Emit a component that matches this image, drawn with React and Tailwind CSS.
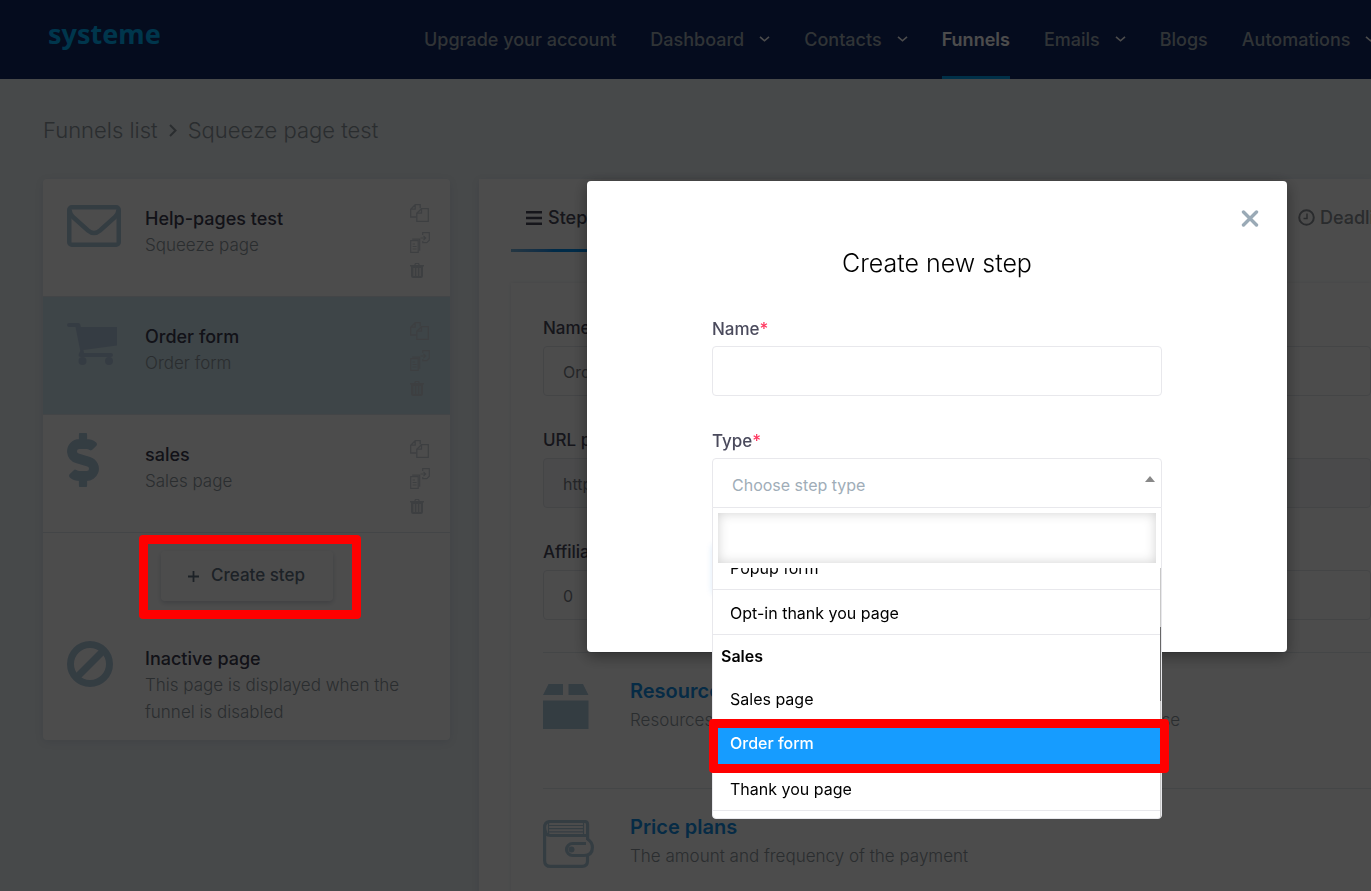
import React, { useState } from 'react';
import { FaDollarSign } from 'react-icons/fa';

const NAV_ITEMS = [
    { label: 'Upgrade your account' },
    { label: 'Dashboard', menu: true },
    { label: 'Contacts', menu: true },
    { label: 'Funnels', active: true },
    { label: 'Emails', menu: true },
    { label: 'Blogs' },
    { label: 'Automations', menu: true },
];

const STEPS = [
    { name: 'Help-pages test', type: 'Squeeze page', icon: 'mail' },
    { name: 'Order form', type: 'Order form', icon: 'cart', selected: true },
    { name: 'sales', type: 'Sales page', icon: 'dollar' },
];

const FIELDS = [
    { id: 'step-name', label: 'Name', value: 'Order form' },
    { id: 'step-url', label: 'URL path', value: 'https://', muted: true },
    { id: 'step-commission', label: 'Affiliate commission', value: '0' },
];

function ChevronDown() {
    return (
        <svg width="11" height="6" viewBox="0 0 11 6" fill="none" stroke="#fff" strokeWidth="1.6">
            <path d="M1 .8l4.500 4L10 .8" />
        </svg>
    );
}

function MailIcon() {
    return (
        <svg width="54" height="42" viewBox="0 0 54 42" fill="none" stroke="currentColor" strokeWidth="4.500">
            <rect x="2.250" y="2.250" width="49.500" height="37.500" rx="2.500" />
            <path d="M2.500 5Q3 9.500 6 12l15 13.500q6 5 12 0L48 12q3-2.500 3.500-7" />
        </svg>
    );
}

function CartIcon() {
    return (
        <svg width="50" height="42" viewBox="0 0 50 42" fill="currentColor">
            <path d="M2 0h9.500q1.500 0 1.800 1.500l.6 2.500H50v18.500L16.500 27l.5 3h27q2 0 2 2t-2 2H14q-3 0-2.300-3l1.600-3L8.500 4H2Q0 4 0 2t2-2z" />
            <circle cx="15.500" cy="38" r="4" />
            <circle cx="42" cy="38" r="4" />
        </svg>
    );
}

function BanIcon() {
    return (
        <svg width="46" height="46" viewBox="0 0 46 46" fill="none" stroke="currentColor" strokeWidth="7">
            <circle cx="23" cy="23" r="19.500" />
            <path d="M9.500 36.500l27-27" />
        </svg>
    );
}

function CopyIcon() {
    return (
        <svg width="19" height="18" viewBox="0 0 19 18" fill="none" stroke="currentColor" strokeWidth="1.300">
            <path d="M6.500 13H.7V5.200L5.200.7h5v3.500M5.200.7v4.500H.7M11.500 4.700v4.500H6.800" />
            <path d="M6.800 9.200l4.700-4.500h6.800v12.600H6.800z" />
        </svg>
    );
}

function TransferIcon() {
    return (
        <svg width="20" height="21" viewBox="0 0 20 21" fill="none" stroke="currentColor" strokeWidth="1.200">
            <path d="M.7 8.700h7.500v11.600H.7zM2.200 7.200h7.500v11.500M2.600 12h2.500M2.600 14.500h4M2.600 17h4" />
            <path d="M12.700 3V.7h6.600v7.500l-2.500 2.500h-4V9" />
            <path d="M10.500 6h5M13.500 3.800L15.700 6l-2.200 2.200" />
        </svg>
    );
}

function TrashIcon() {
    return (
        <svg width="14" height="15" viewBox="0 0 14 15" fill="currentColor">
            <path fillRule="evenodd" d="M0 2h4.200L5 0h4l.8 2H14v1.500h-1V13q0 2-2 2H3q-2 0-2-2V3.500H0zm5.500 0h3L8 1.100H6zM3.500 5v8h1.200V5zm3 0v8h1.200V5zm3 0v8h1.200V5z" />
        </svg>
    );
}

function BoxIcon() {
    return (
        <svg width="46" height="45" viewBox="0 0 46 45" fill="currentColor">
            <path d="M5.500 0H20v11H0zM25.500 0H40l5.500 11h-20zM0 16.500h45.500V45H0z" />
        </svg>
    );
}

function WalletIcon() {
    return (
        <svg width="51" height="48" viewBox="0 0 51 48" fill="none" stroke="currentColor" strokeWidth="3.200">
            <path d="M3 12.500Q1.600 10 1.600 7.500q0-6 6-6h34q3 0 3 3V20M44.500 36v5q0 5.400-5.400 5.400H7.600q-6 0-6-6V8q0 7.500 6 7.500h37" />
            <path d="M43 23.500H29.500a6 6 0 0 0 0 12H41q8.400 0 8.400-8 0-5.500-5-8.500" />
            <path d="M5.500 2v13M40.500 2v13M6 5.500h34M6 8.700h34M6 11.900h34" strokeWidth="1.200" />
            <circle cx="28.500" cy="29.500" r="3" fill="currentColor" stroke="none" />
        </svg>
    );
}

function StepIcon({ icon }) {
    if (icon === 'mail') return <MailIcon />;
    if (icon === 'cart') return <CartIcon />;
    return <FaDollarSign className="-mt-2 h-[54px] w-8" stroke="currentColor" strokeWidth="14" />;
}

function Header() {
    return (
        <header className="flex h-[79px] items-stretch overflow-hidden bg-[#112864] pl-12">
            <a href="#home" className="w-[376px] shrink-0 pt-4 font-['Noto_Sans'] text-[27px] leading-[36px] font-bold text-[#00b4ff]">
                systeme
            </a>
            <nav className="flex gap-[34px] pb-px text-[18px] font-medium whitespace-nowrap text-[#a2adb5]">
                {NAV_ITEMS.map((item) => (
                    <a
                        key={item.label}
                        href={`#${item.label}`}
                        className={item.active
                            ? '-mb-px flex items-center border-b-[3px] border-[#00a0f0] pt-[2px] font-semibold text-white'
                            : 'flex items-center gap-[15px]'}
                    >
                        {item.label}
                        {item.menu && <ChevronDown />}
                    </a>
                ))}
            </nav>
        </header>
    );
}

function StepList() {
    return (
        <aside className="w-[407px] shrink-0 self-start rounded bg-white pb-[14px] shadow-[0_2px_8px_rgba(40,70,110,0.1)]">
            {STEPS.map((step) => (
                <div
                    key={step.name}
                    className={`flex h-[118px] border-b border-[#dfe7ee] pr-5 pl-6 ${step.selected ? 'bg-[#cfe6f0]' : ''}`}
                >
                    <div className={`w-[78px] pt-[26px] ${step.selected ? 'text-[#b3c8e0]' : 'text-[#b0cbde]'}`}>
                        <StepIcon icon={step.icon} />
                    </div>
                    <div className="flex-1 pt-[26px] leading-[27px]">
                        <h2 className="text-[18px] font-medium text-[#3c3c50]">{step.name}</h2>
                        <p className="text-[17px] font-light text-[#8e979e]">{step.type}</p>
                    </div>
                    <div className="flex w-5 flex-col items-start gap-[10px] pt-[25px] text-[#cdd3da]">
                        <button type="button" aria-label="Duplicate step"><CopyIcon /></button>
                        <button type="button" aria-label="Copy step to another funnel"><TransferIcon /></button>
                        <button type="button" aria-label="Delete step"><TrashIcon /></button>
                    </div>
                </div>
            ))}
            <div className="flex justify-center pt-[18px]">
                <div className="relative">
                    <button type="button" className="flex h-[50px] w-[172px] items-center justify-center gap-3 rounded bg-white text-[17px] font-medium text-[#627282] shadow-[0_2px_5px_rgba(30,50,90,0.2)]">
                        <svg width="11" height="11" viewBox="0 0 11 11" stroke="currentColor" strokeWidth="1.800">
                            <path d="M5.500 0v11M0 5.500h11" />
                        </svg>
                        Create step
                    </button>
                    <span className="pointer-events-none absolute -top-4 -right-7 -bottom-[18px] -left-[22px] z-20 rounded border-[9px] border-[#f00]" />
                </div>
            </div>
            <div className="flex pt-10 pr-5 pl-6">
                <div className="w-[78px] shrink-0 text-[#b0cbde]"><BanIcon /></div>
                <div className="leading-[27px]">
                    <h2 className="pt-1 text-[18px] font-medium text-[#3c3c50]">Inactive page</h2>
                    <p className="text-[17px] font-light text-[#8e979e]">This page is displayed when the funnel is disabled</p>
                </div>
            </div>
        </aside>
    );
}

function LinkRow({ icon, title, text }) {
    return (
        <div className="flex h-[136px] border-t border-[#e3e9ee] whitespace-nowrap">
            <div className="w-[87px] shrink-0 pt-[31px] text-[#b0cbde]">{icon}</div>
            <div className="pt-6 leading-[28px]">
                <a href={`#${title}`} className="text-[20px] font-semibold text-[#1590e8]">{title}</a>
                <p className="text-[17px] font-light text-[#8e979e]">{text}</p>
            </div>
        </div>
    );
}

function StepSettings() {
    return (
        <main className="min-w-0 flex-1 bg-white shadow-[0_2px_8px_rgba(40,70,110,0.1)]">
            <div className="flex h-[73px] items-stretch pl-8 text-[18px] font-medium whitespace-nowrap">
                <button type="button" className="relative flex items-center gap-[6px] px-[15px] pt-1 text-[#4a4a5c]">
                    <svg width="16" height="14" viewBox="0 0 16 14" fill="currentColor">
                        <path d="M0 0h16v2.600H0zM0 5.700h16v2.600H0zM0 11.400h16V14H0z" />
                    </svg>
                    Step configuration
                    <span className="absolute inset-x-0 bottom-0 h-[3px] bg-linear-to-r from-[#7bb6dc] to-[#0090f0] to-20%" />
                </button>
                <button type="button" className="ml-auto flex w-[73px] items-center gap-[5px] overflow-hidden pt-1 text-[#8b8f96]">
                    <svg className="shrink-0" width="17" height="17" viewBox="0 0 17 17" fill="none" stroke="currentColor" strokeWidth="2">
                        <circle cx="8.500" cy="8.500" r="7.300" />
                        <path d="M9 4.500v5H5.500" strokeWidth="1.500" />
                    </svg>
                    Deadline settings
                </button>
            </div>
            <div className="pt-[31px] pl-8">
                <form className="pt-[33px] pl-8 shadow-[0_0_4px_rgba(40,70,110,0.12)]">
                    {FIELDS.map((field) => (
                        <div key={field.id} className="mb-8">
                            <label htmlFor={field.id} className="mb-[6px] block text-[17px] leading-6 font-medium text-[#4a4a5c]">
                                {field.label}
                            </label>
                            <input
                                id={field.id}
                                type="text"
                                defaultValue={field.value}
                                className={`block h-[50px] w-full rounded border border-[#e3e7ec] px-[19px] pt-[2px] text-[16px] text-[#7c8088] ${field.muted ? 'bg-[#f8f9fb]' : 'bg-white'}`}
                            />
                        </div>
                    ))}
                    <LinkRow
                        icon={<BoxIcon />}
                        title="Resources"
                        text="Resources which will be accessible by your customers after purchase"
                    />
                    <LinkRow
                        icon={<WalletIcon />}
                        title="Price plans"
                        text="The amount and frequency of the payment"
                    />
                </form>
            </div>
        </main>
    );
}

function Option({ label, highlighted }) {
    return (
        <li
            role="option"
            aria-selected={!!highlighted}
            className={highlighted
                ? 'relative h-[45px] shrink-0 bg-[#169cff] pl-[17px] leading-[45px] font-medium text-white'
                : 'h-[45px] shrink-0 border-b border-[#e8e8ec] pl-[17px] leading-[46px] text-black'}
        >
            {label}
            {highlighted && (
                <span className="pointer-events-none absolute -top-[2px] -right-[9px] -left-[4px] h-[54px] rounded border-[9px] border-[#f00]" />
            )}
        </li>
    );
}

function TypeDropdown() {
    const [search, setSearch] = useState('');

    return (
        <div className="absolute inset-x-0 top-full -mt-px rounded-b border border-[#e8e8ec] bg-white text-[16px]">
            <input
                type="text"
                aria-label="Search step type"
                value={search}
                onChange={(e) => setSearch(e.target.value)}
                className="mx-[5px] my-[5px] block h-[50px] w-[438px] px-3 shadow-[inset_0_0_12px_rgba(0,0,0,0.18)] outline-none"
            />
            <div className="flex h-[250px]">
                <ul role="listbox" aria-label="Step type" className="flex flex-1 flex-col [clip-path:inset(0_-10px_0_-10px)]">
                    <div className="-mt-[23px] shrink-0">
                        <Option label="Popup form" />
                    </div>
                    <Option label="Opt-in thank you page" />
                    <li className="h-[41px] shrink-0 pl-2 leading-[42px] font-semibold text-black">Sales</li>
                    <Option label="Sales page" />
                    <Option label="Order form" highlighted />
                    <Option label="Thank you page" />
                </ul>
                <div className="w-px bg-[#c8c8c8] pt-[59px]">
                    <div className="h-[74px] bg-[#666]" />
                </div>
            </div>
        </div>
    );
}

function CreateStepModal() {
    return (
        <div className="fixed inset-0 z-10 flex items-start justify-end bg-black/70 pt-[181px] pr-[84px]">
            <div role="dialog" aria-label="Create new step" className="relative w-[700px] rounded bg-white px-[125px] pt-[61px] pb-[60px] shadow-[0_4px_16px_rgba(0,0,0,0.4)]">
                <button type="button" aria-label="Close" className="absolute top-[29px] right-7 text-[#9aaab6]">
                    <svg width="18" height="17" viewBox="0 0 18 17" stroke="currentColor" strokeWidth="3.400" strokeLinecap="round">
                        <path d="M2.500 2l13 13M15.500 2l-13 13" />
                    </svg>
                </button>
                <h1 className="mb-8 text-center text-[25px] leading-[43px] font-light text-black">Create new step</h1>
                <form>
                    <label htmlFor="new-name" className="mb-[5px] block text-[17px] leading-6 font-medium text-[#4a4a5c]">
                        Name<span className="text-[#ff3860]">*</span>
                    </label>
                    <input id="new-name" type="text" className="mb-[33px] block h-[50px] w-full rounded border border-[#e8e8ec] px-[19px]" />
                    <label htmlFor="new-type" className="mb-[5px] block text-[17px] leading-6 font-medium text-[#4a4a5c]">
                        Type<span className="text-[#ff3860]">*</span>
                    </label>
                    <div className="relative z-10 mb-[34px]">
                        <button
                            id="new-type"
                            type="button"
                            aria-haspopup="listbox"
                            aria-expanded="true"
                            className="flex h-[50px] w-full items-center justify-between rounded-t border border-[#e8e8ec] bg-white pr-[6px] pl-[19px] text-[16px] text-[#a0adb8]"
                        >
                            <span className="pt-1">Choose step type</span>
                            <svg className="mb-2" width="10" height="6" viewBox="0 0 10 6" fill="#888">
                                <path d="M5 0l5 6H0z" />
                            </svg>
                        </button>
                        <TypeDropdown />
                    </div>
                    <button type="submit" className="block h-[50px] w-[430px] rounded bg-[#169cff] text-[17px] text-white shadow-[0_2px_6px_rgba(22,120,220,0.15)]">
                        Save
                    </button>
                </form>
            </div>
        </div>
    );
}

function App() {
    return (
        <div className="h-screen overflow-hidden bg-[#edf3f7] font-['Inter',sans-serif]">
            <Header />
            <div className="flex items-center gap-[11px] px-[43px] pt-[33px] pb-[31px] text-[22px] leading-9 font-light text-[#8e979e]">
                <a href="#funnels">Funnels list</a>
                <svg width="8" height="13" viewBox="0 0 8 13" fill="none" stroke="currentColor" strokeWidth="2">
                    <path d="M1 1l5.500 5.500L1 12" />
                </svg>
                <span>Squeeze page test</span>
            </div>
            <div className="flex gap-[29px] pl-[43px]">
                <StepList />
                <StepSettings />
            </div>
            <CreateStepModal />
        </div>
    );
}

export default App;
